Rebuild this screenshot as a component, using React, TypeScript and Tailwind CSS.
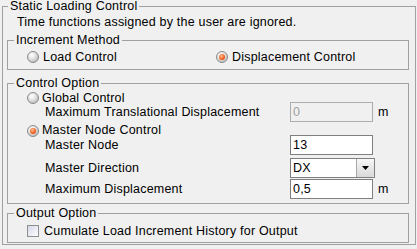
import React from "react";

interface RadioProps {
  checked?: boolean;
}

const Radio: React.FC<RadioProps> = ({ checked }) => (
  <span className="flex h-[12px] w-[12px] shrink-0 items-center justify-center rounded-full border border-[#8a8a8a] bg-[radial-gradient(circle_at_38%_32%,#ffffff_0%,#e8e8e8_35%,#a8a8a8_100%)]">
    {checked && (
      <span className="h-[6px] w-[6px] rounded-full bg-[radial-gradient(circle_at_40%_35%,#ffc09a_0%,#f4621f_55%,#c73d0c_100%)]" />
    )}
  </span>
);

const Checkbox: React.FC = () => (
  <span className="h-[12px] w-[12px] shrink-0 border border-[#8e8f8f] bg-linear-to-br from-[#d5d8e8] to-white" />
);

interface GroupProps {
  title: string;
  className?: string;
  children: React.ReactNode;
}

const Group: React.FC<GroupProps> = ({ title, className, children }) => (
  <fieldset className={`border border-[#a0a0a0] pl-[6px] ${className ?? ""}`}>
    <legend className="px-[2px] leading-[13px]">{title}</legend>
    {children}
  </fieldset>
);

const TextBox: React.FC<{ value: string; disabled?: boolean }> = ({ value, disabled }) => (
  <div
    className={`flex h-[20px] w-[83px] items-center border px-[2px] ${
      disabled ? "border-[#adadad] bg-[#f0f0f0] text-[#a0a0a0]" : "border-[#7f7f7f] bg-white"
    }`}
  >
    {value}
  </div>
);

const FieldRow: React.FC<{ label: string; className?: string; children: React.ReactNode; unit?: boolean }> = ({
  label,
  className,
  children,
  unit,
}) => (
  <div className={`flex h-[20px] items-center ${className ?? ""}`}>
    <span className="w-[276px] pl-[31px]">{label}</span>
    {children}
    {unit && <span className="ml-[5px]">m</span>}
  </div>
);

export default function App() {
  return (
    <div className="h-[249px] w-[417px] bg-[#f0f0f0] font-['Liberation_Sans',Arial,sans-serif] text-[12.5px] tracking-[0.2px] text-black">
      <fieldset className="ml-[2px] w-[414px] border border-[#a0a0a0] pb-[1px] pl-[4px] pr-[6px]">
        <legend className="ml-[1px] px-[2px] leading-[13px]">Static Loading Control</legend>

        <div className="mt-[1px] h-[16px] pl-[10px] leading-[16px]">
          Time functions assigned by the user are ignored.
        </div>

        <Group title="Increment Method" className="mt-[4px] pb-[4px]">
          <div className="mt-[2px] flex h-[16px] items-center">
            <div className="flex w-[202px] items-center gap-[4px] pl-[13px]">
              <Radio />
              <span>Load Control</span>
            </div>
            <div className="flex items-center gap-[4px]">
              <Radio checked />
              <span>Displacement Control</span>
            </div>
          </div>
        </Group>

        <Group title="Control Option" className="mt-[7px] pb-[4px]">
          <div className="flex h-[16px] items-center gap-[3px] pl-[13px]">
            <Radio />
            <span>Global Control</span>
          </div>
          <FieldRow label="Maximum Translational Displacement" className="-mt-[4px]" unit>
            <TextBox value="0" disabled />
          </FieldRow>
          <div className="flex h-[17px] items-center gap-[3px] pl-[13px]">
            <Radio checked />
            <span>Master Node Control</span>
          </div>
          <FieldRow label="Master Node" className="-mt-[4px]">
            <TextBox value="13" />
          </FieldRow>
          <FieldRow label="Master Direction" className="mt-[3px]">
            <div className="flex h-[20px] w-[85px] items-stretch border border-[#7f7f7f] bg-white">
              <span className="flex flex-1 items-center px-[2px]">DX</span>
              <span className="flex w-[18px] items-center justify-center rounded-r-[2px] border-l border-[#a7a7a7] bg-linear-to-b from-[#f7f7f7] to-[#d9d9d9]">
                <svg width="7" height="4" viewBox="0 0 7 4">
                  <path d="M0 0h7L3.5 4z" fill="#000" />
                </svg>
              </span>
            </div>
          </FieldRow>
          <FieldRow label="Maximum Displacement" className="mt-[1px]" unit>
            <TextBox value="0,5" />
          </FieldRow>
        </Group>

        <Group title="Output Option" className="mt-[3px] pb-[3px]">
          <div className="mt-[3px] flex h-[16px] items-center gap-[5px] pl-[13px]">
            <Checkbox />
            <span>Cumulate Load Increment History for Output</span>
          </div>
        </Group>
      </fieldset>
    </div>
  );
}
